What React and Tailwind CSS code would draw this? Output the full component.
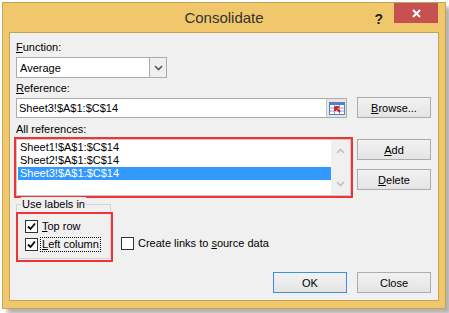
import React from 'react';

const font = { fontFamily: '"Liberation Sans", Arial, sans-serif' };

const Key = ({ children }) => <span className="underline underline-offset-[1px]">{children}</span>;

const Button = ({ children, focused }) => (
  <button
    className={`w-[74px] h-[21px] flex items-center justify-center border text-[11px] text-black bg-gradient-to-b from-[#f2f2f2] to-[#e4e4e4] ${
      focused ? 'border-[#3c8fe6]' : 'border-[#acacac]'
    }`}
  >
    {children}
  </button>
);

const Check = () => (
  <span className="w-[13px] h-[13px] border border-[#333] bg-white flex items-center justify-center shrink-0">
    <svg width="9" height="9" viewBox="0 0 9 9">
      <path d="M1 4.5 L3.5 7 L8 1.5" fill="none" stroke="#000" strokeWidth="1.8" />
    </svg>
  </span>
);

const RefIcon = () => (
  <svg width="16" height="13" viewBox="0 0 16 13">
    <rect x="0.5" y="0.5" width="15" height="12" fill="#fff" stroke="#5a7fbf" />
    <rect x="1" y="1" width="14" height="2" fill="#4f7fd0" />
    <line x1="1" y1="6" x2="15" y2="6" stroke="#7f9fd8" />
    <line x1="1" y1="9" x2="15" y2="9" stroke="#7f9fd8" />
    <line x1="5.5" y1="3" x2="5.5" y2="12" stroke="#7f9fd8" />
    <line x1="10.5" y1="3" x2="10.5" y2="12" stroke="#7f9fd8" />
    <path d="M6 5 L11 10 M6 5 L6 9 M6 5 L10 5" stroke="#e02020" strokeWidth="2" fill="none" />
  </svg>
);

const Chevron = ({ up }) => (
  <svg width="9" height="6" viewBox="0 0 9 6">
    <path d={up ? 'M1 5 L4.5 1.5 L8 5' : 'M1 1 L4.5 4.5 L8 1'} fill="none" stroke="#c0c0c0" strokeWidth="1.6" />
  </svg>
);

export default function App() {
  const refs = ['Sheet1!$A$1:$C$14', 'Sheet2!$A$1:$C$14', 'Sheet3!$A$1:$C$14'];

  return (
    <div className="w-[449px] h-[313px] bg-white pl-[2px] pt-[2px] overflow-hidden" style={font}>
      <div className="w-[444px] h-[307px] border border-[#c6a256] bg-[#f0c86b] flex flex-col shadow-[5px_5px_4px_rgba(0,0,0,0.3)]">
        {/* title bar */}
        <div className="h-[29px] relative flex items-center justify-center">
          <span className="text-[15px] text-[#333] leading-none">Consolidate</span>
          <div className="absolute right-[7px] top-0 flex items-start">
            <span className="text-[14px] font-bold text-[#222] mt-[6px] mr-[11px]">?</span>
            <div className="w-[44px] h-[20px] bg-[#c75050] flex items-center justify-center">
              <svg width="9" height="9" viewBox="0 0 9 9">
                <path d="M1 1 L8 8 M8 1 L1 8" stroke="#fff" strokeWidth="2" />
              </svg>
            </div>
          </div>
        </div>

        {/* client area */}
        <div className="mx-[6px] h-[269px] border border-[#c4a25a] bg-[#f0f0f0] pl-[6px] pr-[7px] pt-[7px] text-[11px] text-black leading-[14px]">
          <div className="h-[14px]"><Key>F</Key>unction:</div>
          <div className="mt-[3px] w-[151px] h-[21px] border border-[#acacac] bg-white flex">
            <span className="flex-1 pl-[3px] flex items-center">Average</span>
            <span className="w-[17px] border-l border-[#acacac] bg-[#efefef] flex items-center justify-center">
              <svg width="9" height="6" viewBox="0 0 9 6">
                <path d="M1 1 L4.5 4.5 L8 1" fill="none" stroke="#555" strokeWidth="1.6" />
              </svg>
            </span>
          </div>

          <div className="mt-[3px] h-[14px]"><Key>R</Key>eference:</div>
          <div className="mt-[2px] flex items-start justify-between">
            <div className="mt-[1px] w-[331px] h-[20px] border border-[#acacac] bg-white flex">
              <span className="flex-1 pl-[2px] flex items-center">Sheet3!$A$1:$C$14</span>
              <span className="w-[20px] bg-[#e6e6e6] border-l border-[#c8c8c8] flex items-center justify-center">
                <RefIcon />
              </span>
            </div>
            <Button><Key>B</Key>rowse...</Button>
          </div>

          <div className="mt-[4px] h-[14px]">All references:</div>
          <div className="mt-[1px] flex items-start justify-between">
            <div className="-ml-[2px] w-[339px] h-[61px] border-2 border-[#ee3535]">
              <div className="h-[57px] border border-[#c8c8c8] bg-white flex">
                <div className="flex-1 pt-[1px] pl-[1px]">
                  {refs.map((r, i) => (
                    <div
                      key={r}
                      className={`h-[13px] leading-[13px] pl-[2px] ${i === 2 ? 'bg-[#3399ff] text-white' : ''}`}
                    >
                      {r}
                    </div>
                  ))}
                </div>
                <div className="w-[19px] bg-[#f0f0f0] flex flex-col items-center justify-between py-[8px]">
                  <Chevron up />
                  <Chevron />
                </div>
              </div>
            </div>
            <div className="flex flex-col gap-[9px] mt-[2px]">
              <Button><Key>A</Key>dd</Button>
              <Button><Key>D</Key>elete</Button>
            </div>
          </div>

          <div className="mt-[6px] flex items-start">
            <div className="relative w-[95px] h-[55px] border border-[#d5d5d5]">
              <span className="absolute -top-[8px] left-[4px] px-[1px] bg-[#f0f0f0] leading-[14px]">Use labels in</span>
              <div className="flex flex-col gap-[5px] pl-[8px] pt-[15px]">
                <div className="h-[13px] flex items-center gap-[3px]">
                  <Check />
                  <span className="px-[1px] leading-[13px]"><Key>T</Key>op row</span>
                </div>
                <div className="h-[13px] flex items-center gap-[2px]">
                  <Check />
                  <span className="px-[1px] leading-[13px] border border-dotted border-black"><Key>L</Key>eft column</span>
                </div>
              </div>
              <div className="absolute -left-[1px] top-[7px] w-[97px] h-[50px] border-2 border-[#ee3535]" />
            </div>
            <div className="ml-[10px] pt-[33px]">
              <div className="h-[13px] flex items-center gap-[4px]">
                <span className="w-[13px] h-[13px] border border-[#333] bg-white shrink-0" />
                <span className="leading-[13px]">
                  Create links to <Key>s</Key>ource data
                </span>
              </div>
            </div>
          </div>

          <div className="mt-[13px] flex justify-end gap-[10px]">
            <Button focused>OK</Button>
            <Button>Close</Button>
          </div>
        </div>
      </div>
    </div>
  );
}
